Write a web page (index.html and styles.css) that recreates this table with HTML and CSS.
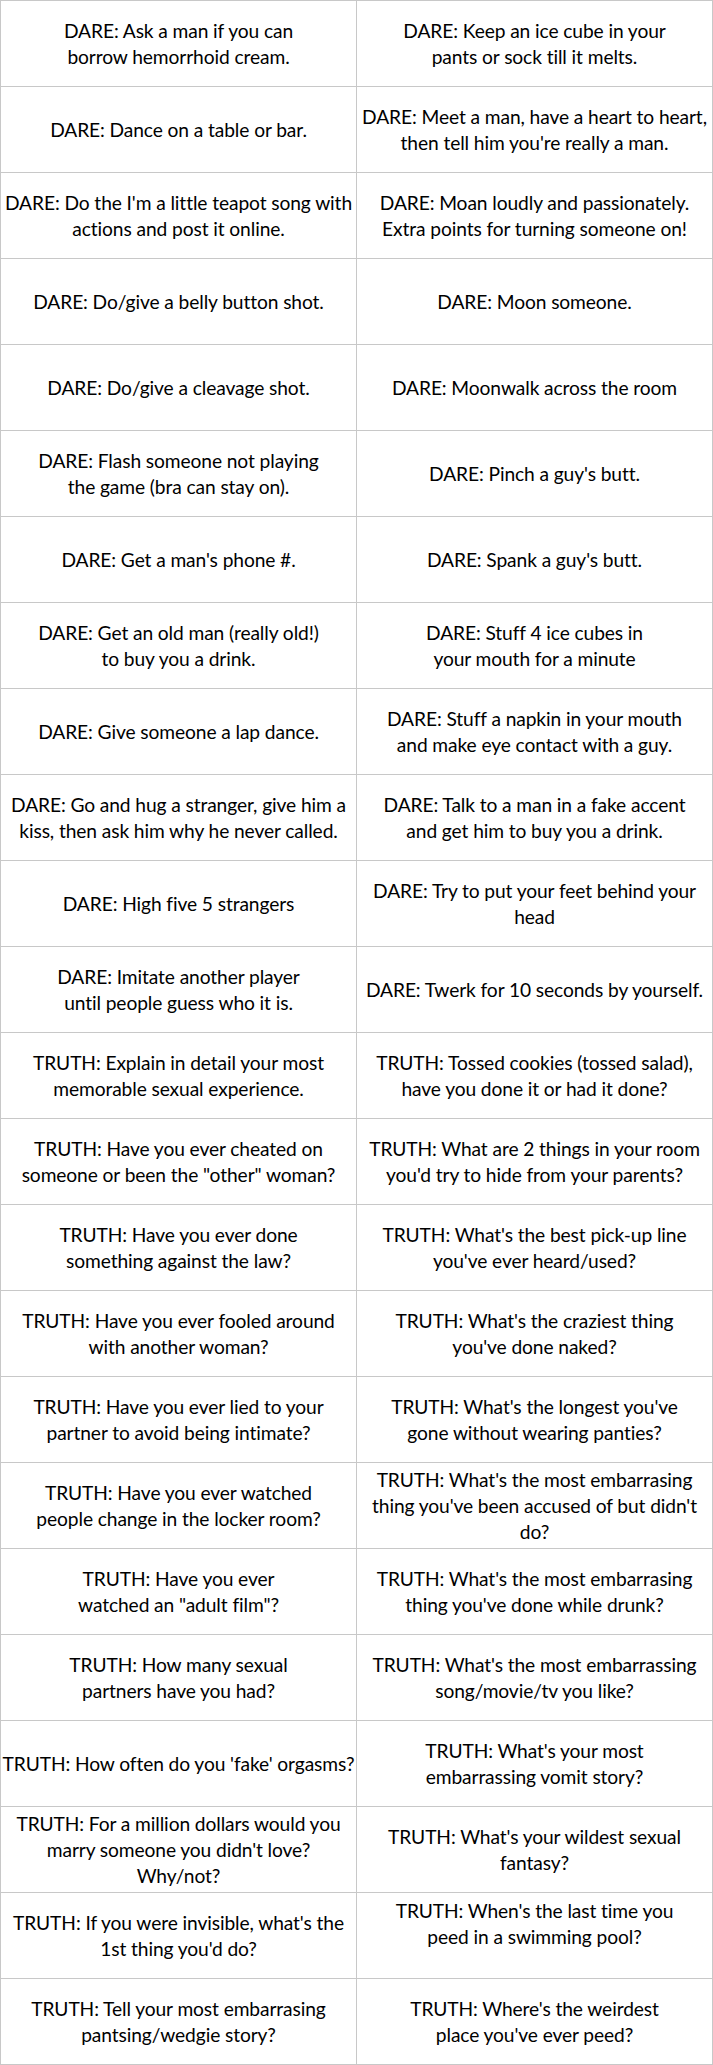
FILE: index.html
```html
<!DOCTYPE html>
<html lang="en">
<head>
<meta charset="utf-8">
<title>Truth or Dare</title>
<link rel="stylesheet" href="styles.css">
</head>
<body>
<div class="grid">
  <div class="cell">DARE: Ask a man if you can<br>borrow hemorrhoid cream.</div>
  <div class="cell">DARE: Keep an ice cube in your<br>pants or sock till it melts.</div>

  <div class="cell">DARE: Dance on a table or bar.</div>
  <div class="cell">DARE: Meet a man, have a heart to heart,<br>then tell him you're really a man.</div>

  <div class="cell">DARE: Do the I'm a little teapot song with<br>actions and post it online.</div>
  <div class="cell">DARE: Moan loudly and passionately.<br>Extra points for turning someone on!</div>

  <div class="cell">DARE: Do/give a belly button shot.</div>
  <div class="cell">DARE: Moon someone.</div>

  <div class="cell">DARE: Do/give a cleavage shot.</div>
  <div class="cell">DARE: Moonwalk across the room</div>

  <div class="cell">DARE: Flash someone not playing<br>the game (bra can stay on).</div>
  <div class="cell">DARE: Pinch a guy's butt.</div>

  <div class="cell">DARE: Get a man's phone #.</div>
  <div class="cell">DARE: Spank a guy's butt.</div>

  <div class="cell">DARE: Get an old man (really old!)<br>to buy you a drink.</div>
  <div class="cell">DARE: Stuff 4 ice cubes in<br>your mouth for a minute</div>

  <div class="cell">DARE: Give someone a lap dance.</div>
  <div class="cell">DARE: Stuff a napkin in your mouth<br>and make eye contact with a guy.</div>

  <div class="cell">DARE: Go and hug a stranger, give him a<br>kiss, then ask him why he never called.</div>
  <div class="cell">DARE: Talk to a man in a fake accent<br>and get him to buy you a drink.</div>

  <div class="cell">DARE: High five 5 strangers</div>
  <div class="cell">DARE: Try to put your feet behind your<br>head</div>

  <div class="cell">DARE: Imitate another player<br>until people guess who it is.</div>
  <div class="cell">DARE: Twerk for 10 seconds by yourself.</div>

  <div class="cell">TRUTH: Explain in detail your most<br>memorable sexual experience.</div>
  <div class="cell">TRUTH: Tossed cookies (tossed salad),<br>have you done it or had it done?</div>

  <div class="cell">TRUTH: Have you ever cheated on<br>someone or been the "other" woman?</div>
  <div class="cell">TRUTH: What are 2 things in your room<br>you'd try to hide from your parents?</div>

  <div class="cell">TRUTH: Have you ever done<br>something against the law?</div>
  <div class="cell">TRUTH: What's the best pick-up line<br>you've ever heard/used?</div>

  <div class="cell">TRUTH: Have you ever fooled around<br>with another woman?</div>
  <div class="cell">TRUTH: What's the craziest thing<br>you've done naked?</div>

  <div class="cell">TRUTH: Have you ever lied to your<br>partner to avoid being intimate?</div>
  <div class="cell">TRUTH: What's the longest you've<br>gone without wearing panties?</div>

  <div class="cell">TRUTH: Have you ever watched<br>people change in the locker room?</div>
  <div class="cell">TRUTH: What's the most embarrasing<br>thing you've been accused of but didn't<br>do?</div>

  <div class="cell">TRUTH: Have you ever<br>watched an "adult film"?</div>
  <div class="cell">TRUTH: What's the most embarrasing<br>thing you've done while drunk?</div>

  <div class="cell">TRUTH: How many sexual<br>partners have you had?</div>
  <div class="cell">TRUTH: What's the most embarrassing<br>song/movie/tv you like?</div>

  <div class="cell">TRUTH: How often do you 'fake' orgasms?</div>
  <div class="cell">TRUTH: What's your most<br>embarrassing vomit story?</div>

  <div class="cell">TRUTH: For a million dollars would you<br>marry someone you didn't love?<br>Why/not?</div>
  <div class="cell">TRUTH: What's your wildest sexual<br>fantasy?</div>

  <div class="cell">TRUTH: If you were invisible, what's the<br>1st thing you'd do?</div>
  <div class="cell cell-raised">TRUTH: When's the last time you<br>peed in a swimming pool?</div>

  <div class="cell">TRUTH: Tell your most embarrasing<br>pantsing/wedgie story?</div>
  <div class="cell">TRUTH: Where's the weirdest<br>place you've ever peed?</div>
</div>
</body>
</html>
```
FILE: styles.css
```css
html, body {
  margin: 0;
  padding: 0;
  background: #ffffff;
}

.grid {
  width: 713px;
  box-sizing: border-box;
  display: grid;
  grid-template-columns: 356px 356px;
  grid-auto-rows: 86px;
  border-top: 1px solid #c8c8c8;
  border-left: 1px solid #c8c8c8;
  font-family: Lato, "Open Sans", sans-serif;
  font-size: 19.2px;
  letter-spacing: -0.1px;
  line-height: 26px;
  color: #000000;
}

.cell {
  box-sizing: border-box;
  border-right: 1px solid #c8c8c8;
  border-bottom: 1px solid #c8c8c8;
  display: flex;
  align-items: center;
  justify-content: center;
  text-align: center;
  white-space: nowrap;
  padding: 0 2px;
}

.cell-raised {
  padding-bottom: 24px;
}
```
